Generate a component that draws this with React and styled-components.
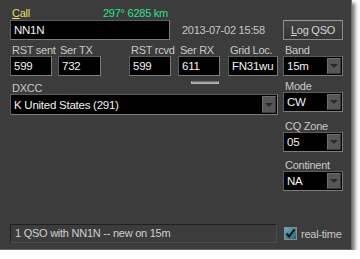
import styled, { createGlobalStyle } from "styled-components"

const Global = createGlobalStyle`
  html, body {
    margin: 0;
    padding: 0;
    background: #ffffff;
  }
  body {
    font-family: "Liberation Sans", Arial, sans-serif;
    font-size: 11px;
    letter-spacing: -0.25px;
  }
`
const Window = styled.div`
  width: 352px;
  height: 250px;
  box-sizing: border-box;
  background-color: #3c3c3c;
  border-right: 1px solid #6a6a6a;
  border-bottom: 1px solid #6a6a6a;
  box-shadow: 3px 3px 4px rgba(0, 0, 0, 0.55);
  padding: 7px 8px 6px 10px;
  display: flex;
  flex-direction: column;
  color: #c8c8c8;
`
const Main = styled.div`
  display: flex;
  gap: 5px;
`
const LeftArea = styled.div`
  width: 268px;
  flex-shrink: 0;
  display: flex;
  flex-direction: column;
`
const RightArea = styled.div`
  width: 60px;
  display: flex;
  flex-direction: column;
  padding-top: 13px;
`
const HeadRow = styled.div`
  width: 160px;
  height: 13px;
  display: flex;
  justify-content: space-between;
  align-items: flex-start;
  line-height: 12px;
  padding: 0 2px;
  box-sizing: border-box;
`
const CallLabel = styled.span`
  color: #e6df6a;
  u { text-decoration: underline; }
`
const Distance = styled.span`
  color: #2fe08c;
`
const CallRow = styled.div`
  display: flex;
  align-items: center;
  gap: 12px;
`
const Input = styled.div`
  width: ${p => p.$w || 160}px;
  height: 20px;
  box-sizing: border-box;
  background: #000;
  border: 1px solid #7c7c7c;
  border-top-color: #5c5c5c;
  border-left-color: #5c5c5c;
  color: #f2f2f2;
  font-size: 11.5px;
  line-height: 18px;
  padding: 0 3px;
  white-space: nowrap;
  overflow: hidden;
`
const DateText = styled.span`
  color: #c8c8c8;
`
const FieldsRow = styled.div`
  display: flex;
`
const Field = styled.div`
  position: relative;
  width: ${p => p.$w || 60}px;
  flex-shrink: 0;
  display: flex;
  flex-direction: column;
  margin-right: ${p => p.$mr || 0}px;
`
const Label = styled.div`
  height: ${p => p.$h || 16}px;
  display: flex;
  align-items: flex-end;
  line-height: 12px;
  padding-left: 2px;
  white-space: nowrap;
  color: #c8c8c8;
`
const Meter = styled.div`
  position: absolute;
  left: 13px;
  top: 41px;
  width: 28px;
  height: 3px;
  box-sizing: border-box;
  background: #9a9a9a;
  border: 1px solid #b8b8b8;
  border-top-color: #707070;
`
const DxccBlock = styled.div`
  display: flex;
  flex-direction: column;
`
const Combo = styled.div`
  width: ${p => p.$w || 60}px;
  height: ${p => p.$h || 20}px;
  box-sizing: border-box;
  background: #000;
  border: 1px solid #7c7c7c;
  border-top-color: #5c5c5c;
  border-left-color: #5c5c5c;
  display: flex;
  align-items: center;
  justify-content: space-between;
  padding: 1px 1px 1px 3px;
  color: #f2f2f2;
  font-size: 11.5px;
`
const Arrow = styled.div`
  width: 14px;
  height: 100%;
  box-sizing: border-box;
  background: #565656;
  border: 1px solid #6e6e6e;
  border-right-color: #3a3a3a;
  border-bottom-color: #3a3a3a;
  display: flex;
  align-items: center;
  justify-content: center;
  &::after {
    content: "";
    border-left: 4px solid transparent;
    border-right: 4px solid transparent;
    border-top: 4px solid #2a2a2a;
  }
`
const LogButton = styled.button`
  width: 60px;
  height: 20px;
  box-sizing: border-box;
  background: linear-gradient(#424242, #363636);
  border: 1px solid #8a8a8a;
  border-top-color: #9a9a9a;
  color: #d6d6d6;
  font-family: inherit;
  font-size: 11px;
  letter-spacing: inherit;
  padding: 0;
  u { text-decoration: underline; }
`
const StatusRow = styled.div`
  margin-top: auto;
  display: flex;
  align-items: center;
  gap: 7px;
`
const StatusBox = styled.div`
  width: 267px;
  height: 19px;
  flex-shrink: 0;
  box-sizing: border-box;
  border-top: 1px solid #202020;
  border-left: 1px solid #202020;
  border-bottom: 1px solid #4a4a4a;
  border-right: 1px solid #4a4a4a;
  padding: 0 4px;
  line-height: 17px;
  color: #d0d0d0;
  white-space: nowrap;
`
const Check = styled.label`
  display: flex;
  align-items: center;
  gap: 4px;
  color: #c8c8c8;
  white-space: nowrap;
`
const Box = styled.span`
  width: 13px;
  height: 13px;
  flex-shrink: 0;
  box-sizing: border-box;
  border: 1px solid #8a8a8a;
  background: linear-gradient(135deg, #5fb0c4, #1f6578);
  display: flex;
  align-items: center;
  justify-content: center;
`

function ComboField({ label, value, labelH }) {
  return (
    <Field>
      <Label $h={labelH}>{label}</Label>
      <Combo>
        <span>{value}</span>
        <Arrow />
      </Combo>
    </Field>
  )
}

export default function App() {
  return (
    <>
      <Global />
      <Window>
        <Main>
          <LeftArea>
            <HeadRow>
              <CallLabel><u>C</u>all</CallLabel>
              <Distance>297° 6285 km</Distance>
            </HeadRow>
            <CallRow>
              <Input $w={160}>NN1N</Input>
              <DateText>2013-07-02 15:58</DateText>
            </CallRow>
            <FieldsRow>
              <Field $w={42} $mr={6}>
                <Label>RST sent</Label>
                <Input $w={42}>599</Input>
              </Field>
              <Field $w={43} $mr={28}>
                <Label>Ser TX</Label>
                <Input $w={43}>732</Input>
              </Field>
              <Field $w={42} $mr={7}>
                <Label>RST rcvd</Label>
                <Input $w={42}>599</Input>
              </Field>
              <Field $w={42} $mr={8}>
                <Label>Ser RX</Label>
                <Input $w={42}>611</Input>
                <Meter />
              </Field>
              <Field $w={50}>
                <Label>Grid Loc.</Label>
                <Input $w={50}>FN31wu</Input>
              </Field>
            </FieldsRow>
            <DxccBlock>
              <Label $h={18}>DXCC</Label>
              <Combo $w={268} $h={21}>
                <span>K United States (291)</span>
                <Arrow />
              </Combo>
            </DxccBlock>
          </LeftArea>
          <RightArea>
            <LogButton><u>L</u>og QSO</LogButton>
            <ComboField label="Band" value="15m" labelH={16} />
            <ComboField label="Mode" value="CW" labelH={16} />
            <ComboField label="CQ Zone" value="05" labelH={20} />
            <ComboField label="Continent" value="NA" labelH={19} />
          </RightArea>
        </Main>
        <StatusRow>
          <StatusBox>1 QSO with NN1N -- new on 15m</StatusBox>
          <Check>
            <Box>
              <svg width="11" height="11" viewBox="0 0 11 11">
                <path d="M1.5 5.5 L4 8.5 L9.5 1.5" fill="none" stroke="#000" strokeWidth="2" />
              </svg>
            </Box>
            real-time
          </Check>
        </StatusRow>
      </Window>
    </>
  )
}
